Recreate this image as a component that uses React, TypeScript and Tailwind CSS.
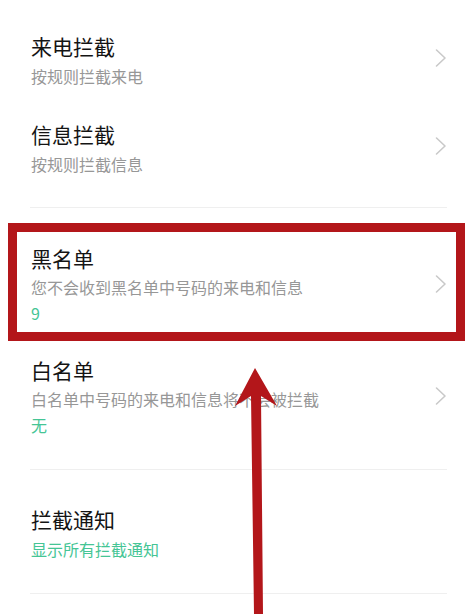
import React from 'react'

const font = { fontFamily: '"Noto Sans CJK SC", "Noto Sans", sans-serif' }

function Chevron({ className = '' }: { className?: string }) {
  return (
    <svg className={`w-[12px] h-[20px] shrink-0 ${className}`} viewBox="0 0 12 20" fill="none">
      <path d="M1.5 2 L10 10 L1.5 18" stroke="#c9c9c9" strokeWidth={1.6} strokeLinecap="round" strokeLinejoin="round" />
    </svg>
  )
}

interface RowProps {
  title: string
  desc: string
  descGreen?: boolean
  value?: string
  chevron?: boolean
  chevronClass?: string
  className?: string
  children?: React.ReactNode
}

function Row({ title, desc, descGreen, value, chevron = true, chevronClass = '', className = '', children }: RowProps) {
  return (
    <div className={`relative flex items-center pl-[31px] pr-[21px] ${className}`}>
      <div className="flex-1 flex flex-col">
        <div className="text-[21px] leading-[30px] text-[#141414]">{title}</div>
        <div className={`text-[16px] ${value ? 'leading-[28px]' : 'leading-[30px]'} ${descGreen ? 'text-[#45c595]' : 'text-[#979797]'}`}>
          {desc}
        </div>
        {value && <div className="text-[16px] leading-[24px] text-[#45c595]">{value}</div>}
      </div>
      {chevron && <Chevron className={chevronClass} />}
      {children}
    </div>
  )
}

function Divider() {
  return <div className="h-px bg-[#efefef] ml-[30px] mr-[21px]" />
}

export default function App() {
  return (
    <div className="relative h-[614px] overflow-hidden bg-white" style={font}>
      {/* interception rules */}
      <div className="pt-[17px] pb-[14px]">
        <Row title="来电拦截" desc="按规则拦截来电" className="py-[14px]" chevronClass="mb-[7px]" />
        <Row title="信息拦截" desc="按规则拦截信息" className="py-[14px]" chevronClass="mb-[7px]" />
      </div>
      <Divider />

      {/* lists */}
      <div className="pt-[20px] pb-[17px]">
        <Row title="黑名单" desc="您不会收到黑名单中号码的来电和信息" value="9" className="py-[15px]">
          <div className="absolute top-[-5px] bottom-[-1px] left-[8px] right-[3px] border-[9px] border-[#b3161a] pointer-events-none" />
        </Row>
        <Row title="白名单" desc="白名单中号码的来电和信息将不会被拦截" value="无" className="py-[15px]" />
      </div>
      <Divider />

      {/* notification */}
      <div className="pt-[20px] pb-[15px]">
        <Row title="拦截通知" desc="显示所有拦截通知" descGreen chevron={false} className="py-[14px]" />
      </div>
      <Divider />

      {/* annotation arrow */}
      <svg className="absolute left-[226px] top-[366px] w-[60px] h-[248px] pointer-events-none" viewBox="0 0 60 248">
        <polygon points="29,2 51,40 35,30 37,248 28,248 25,30 9,40" fill="#b3161a" />
      </svg>
    </div>
  )
}
